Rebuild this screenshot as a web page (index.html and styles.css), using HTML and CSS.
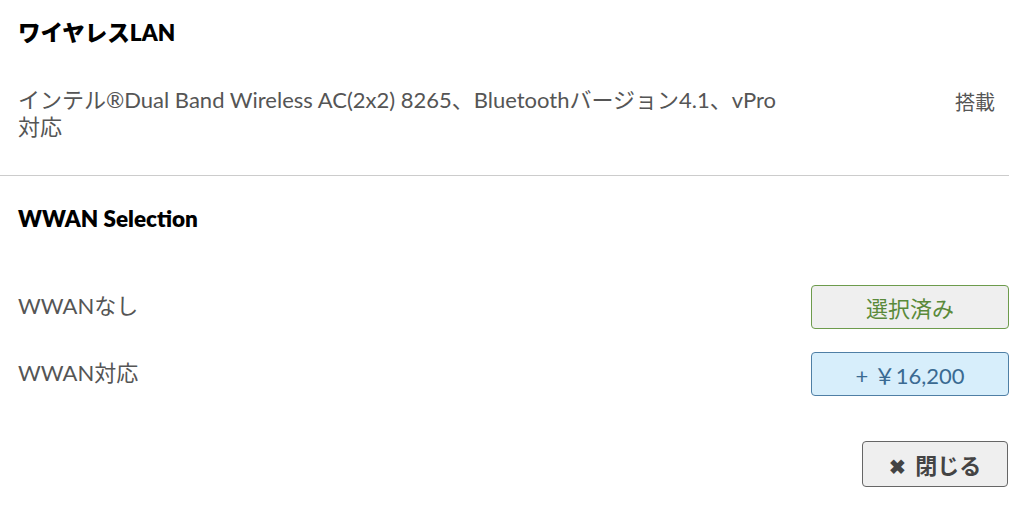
FILE: index.html
```html
<!DOCTYPE html>
<html lang="ja">
<head>
<meta charset="utf-8">
<link rel="stylesheet" href="styles.css">
</head>
<body>
<div class="page">
  <section class="section first">
    <h2 class="title">ワイヤレスLAN</h2>
    <div class="row desc-row">
      <p class="desc">インテル®Dual Band Wireless AC(2x2) 8265、Bluetoothバージョン4.1、vPro 対応</p>
      <span class="status">搭載</span>
    </div>
  </section>
  <hr class="divider">
  <section class="section second">
    <h2 class="title">WWAN Selection</h2>
    <div class="options">
      <div class="row option">
        <span class="label">WWANなし</span>
        <button class="btn btn-selected">選択済み</button>
      </div>
      <div class="row option">
        <span class="label">WWAN対応</span>
        <button class="btn btn-price">+ ￥16,200</button>
      </div>
    </div>
    <div class="footer">
      <button class="btn-close"><span class="x">✖</span> 閉じる</button>
    </div>
  </section>
</div>
</body>
</html>
```

FILE: styles.css
```css
* { box-sizing: border-box; }
html, body { margin: 0; padding: 0; background: #fff; }
body {
  font-family: Lato, "Noto Sans CJK JP", sans-serif;
  color: #555;
  width: 1024px;
  height: 518px;
  overflow: hidden;
}
.page { width: 1009px; }
.section { padding: 0 0 0 18px; }
.first { padding-top: 20px; padding-bottom: 35px; }
.title {
  margin: 0;
  font-size: 22.5px;
  line-height: 26px;
  font-weight: 800;
  color: #000;
}
.row {
  display: flex;
  justify-content: space-between;
  align-items: center;
}
.desc-row { margin-top: 40px; align-items: flex-start; }
.desc {
  margin: 0;
  width: 785px;
  font-size: 22px;
  line-height: 27px;
  color: #555;
}
.status {
  font-size: 20px;
  line-height: 27px;
  margin-top: 3px;
  margin-right: 14px;
  color: #555;
}
.divider {
  margin: 0;
  border: 0;
  border-top: 1px solid #ccc;
  height: 0;
}
.second { padding-top: 30px; }
.options {
  margin-top: 53px;
  display: flex;
  flex-direction: column;
  gap: 23px;
}
.label { font-size: 22px; line-height: 27px; color: #555; margin-top: -4px; }
.btn {
  width: 198px;
  height: 44px;
  border-radius: 4px;
  font-family: Lato, "Noto Sans CJK JP", sans-serif;
  font-size: 22px;
  padding: 0;
}
.btn-selected {
  background: #efefef;
  border: 1.5px solid #6d9b4c;
  color: #5a8a3a;
}
.btn-price {
  background: #d7eefb;
  border: 1.5px solid #4f7fa5;
  color: #3a6a92;
}
.footer {
  margin-top: 45px;
  display: flex;
  justify-content: flex-end;
  padding-right: 1px;
}
.btn-close {
  width: 146px;
  height: 46px;
  background: #efefef;
  border: 1.5px solid #666;
  border-radius: 4px;
  font-family: Lato, "Noto Sans CJK JP", sans-serif;
  font-size: 22px;
  font-weight: 700;
  color: #444;
  padding: 0;
}
.x { font-size: 20px; margin-right: 4px; }
```
